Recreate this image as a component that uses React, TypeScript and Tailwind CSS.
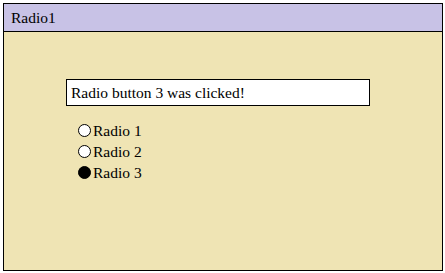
export default function App() {
  const items = ["Radio 1", "Radio 2", "Radio 3"];
  const selected = 2;

  return (
    <div className="w-[445px] h-[273px] bg-white pl-[3px] pt-[3px] font-['Liberation_Serif','Times_New_Roman',serif] text-black">
      {/* frame */}
      <div className="w-[440px] h-[268px] border border-black bg-[#efe4b4] flex flex-col">
        <div className="h-[28px] bg-[#c8c2e6] border-b border-black pl-[7px] flex items-center text-[15.5px] leading-none">
          Radio1
        </div>
        <div className="pl-[62px] pt-[47px]">
          <div className="w-[304px] h-[27px] border border-black bg-white pl-[4px] flex items-center text-[15.5px] leading-none">
            Radio button {selected + 1} was clicked!
          </div>
          <div className="mt-[14px] pl-[12px] flex flex-col">
            {items.map((label, i) => (
              <div key={label} className="h-[21px] flex items-center gap-[2px] text-[15.5px] leading-none">
                <span
                  className={`w-[13px] h-[13px] rounded-full border border-black ${
                    i === selected ? "bg-black" : "bg-white"
                  }`}
                />
                <span>{label}</span>
              </div>
            ))}
          </div>
        </div>
      </div>
    </div>
  );
}
